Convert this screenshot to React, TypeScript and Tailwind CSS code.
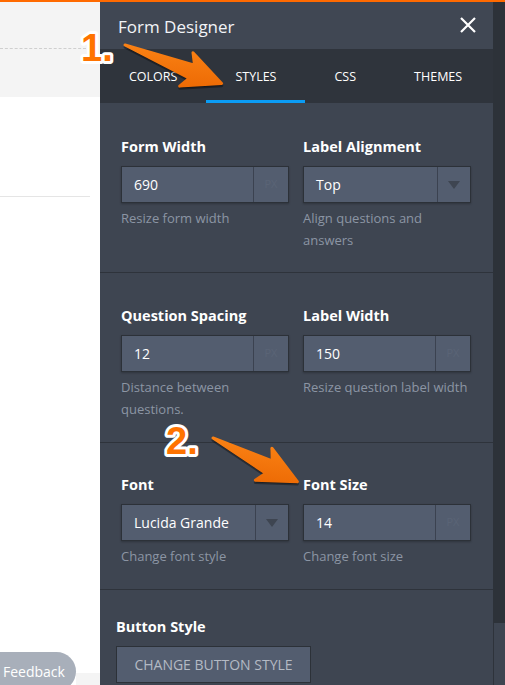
import React from "react";

const font = { fontFamily: '"Open Sans", "Noto Sans", Arial, sans-serif' };

function NumberInput({ value }: { value: string }) {
  return (
    <div className="flex h-[37px] border border-[#2c3138] bg-[#535d6f] shadow-[0_1px_2px_rgba(0,0,0,0.25)]">
      <div className="flex flex-1 items-center pl-[12px] text-[14px] text-white">{value}</div>
      <div className="flex w-[35px] items-center justify-center border-l border-[#3b4250] text-[11px] text-[#5a6476]">PX</div>
    </div>
  );
}

function SelectInput({ value }: { value: string }) {
  return (
    <div className="flex h-[37px] border border-[#2c3138] bg-[#535d6f] shadow-[0_1px_2px_rgba(0,0,0,0.25)]">
      <div className="flex flex-1 items-center pl-[12px] text-[14px] text-white">{value}</div>
      <div className="flex w-[33px] items-center justify-center border-l border-[#3b4250]">
        <div className="h-0 w-0 border-l-[6px] border-r-[6px] border-t-[8px] border-l-transparent border-r-transparent border-t-[#3e4551]" />
      </div>
    </div>
  );
}

function Field({ label, hint, children }: { label: string; hint: React.ReactNode; children: React.ReactNode }) {
  return (
    <div className="flex w-[168px] flex-col">
      <div className="mb-[9px] h-[20px] text-[14.5px] font-bold leading-[20px] text-white">{label}</div>
      {children}
      <div className="mt-[4px] text-[13px] leading-[22px] text-[#8c95a4]">{hint}</div>
    </div>
  );
}

function Section({ top, bottom, children }: { top: string; bottom: string; children: React.ReactNode }) {
  return (
    <div className={"flex gap-[14px] border-b border-[#2e333b] px-[21px] " + top + " " + bottom}>{children}</div>
  );
}

function Arrow({ x, y, angle, len }: { x: number; y: number; angle: number; len: number }) {
  const h = len - 36;
  const pts = `0,0 ${h + 4},-7 ${h - 2},-18 ${len},0 ${h - 2},18 ${h + 4},7`;
  return (
    <g transform={`translate(${x} ${y}) rotate(${angle})`}>
      <polygon points={pts} fill="rgba(0,0,0,0.35)" transform="translate(1 2)" stroke="rgba(0,0,0,0.35)" strokeWidth="3" strokeLinejoin="round" />
      <polygon points={pts} fill="url(#ag)" stroke="url(#ag)" strokeWidth="3" strokeLinejoin="round" />
    </g>
  );
}

export default function App() {
  return (
    <div className="relative flex h-[685px] w-[505px] overflow-hidden border-t-2 border-[#ff6a00] bg-white" style={font}>
      {/* left canvas */}
      <div className="relative flex w-[100px] flex-col">
        <div className="flex h-[95px] items-center bg-[#f4f4f4]">
          <div className="mb-[2px] w-[86px] border-t-[1.5px] border-dashed border-[#cfcfcf]" />
        </div>
        <div className="mt-[99px] w-[90px] border-t border-[#e5e5e5]" />
        <div className="absolute bottom-0 right-0 h-[12px] w-[24px] bg-[#f4f4f4]" />
        <div className="absolute bottom-[-6px] left-[-20px] flex h-[39px] items-center rounded-full bg-[#a8afba] pl-[23px] pr-[11px] text-[14px] text-white">
          Feedback
        </div>
      </div>

      {/* designer panel */}
      <div className="flex w-[393px] flex-col bg-[#3e4551]">
        <div className="flex h-[47px] items-center justify-between bg-[#404753] pl-[18px] pr-[16px] pt-[2px]">
          <span className="text-[17px] text-[#f2f4f7]">Form Designer</span>
          <svg width="18" height="18" viewBox="0 0 18 18" className="mb-[3px]">
            <path d="M2 2 L16 16 M16 2 L2 16" stroke="#ffffff" strokeWidth="2.2" />
          </svg>
        </div>
        <div className="flex h-[54px] bg-[#2f343c] text-[12.5px] text-white">
          {["COLORS", "STYLES", "CSS", "THEMES"].map((t) => (
            <div
              key={t}
              className={
                t === "STYLES"
                  ? "flex items-center border-b-[3px] border-[#0a9cf5] px-[29px] pt-[6px]"
                  : "flex items-center px-[29px] pt-[3px]"
              }
            >
              {t}
            </div>
          ))}
        </div>
        <Section top="pt-[34px]" bottom="pb-[21px]">
          <Field label="Form Width" hint="Resize form width">
            <NumberInput value="690" />
          </Field>
          <Field label="Label Alignment" hint={<>Align questions and<br />answers</>}>
            <SelectInput value="Top" />
          </Field>
        </Section>
        <Section top="pt-[33px]" bottom="pb-[22px]">
          <Field label="Question Spacing" hint={<>Distance between<br />questions.</>}>
            <NumberInput value="12" />
          </Field>
          <Field label="Label Width" hint="Resize question label width">
            <NumberInput value="150" />
          </Field>
        </Section>
        <Section top="pt-[32px]" bottom="pb-[22px]">
          <Field label="Font" hint="Change font style">
            <SelectInput value="Lucida Grande" />
          </Field>
          <Field label="Font Size" hint="Change font size">
            <NumberInput value="14" />
          </Field>
        </Section>
        <div className="flex flex-col px-[16px] pt-[27px]">
          <div className="mb-[9px] h-[20px] text-[14.5px] font-bold leading-[20px] text-white">Button Style</div>
          <button className="h-[37px] w-[195px] border border-[#2c3138] bg-[#535d6f] text-[14px] text-[#b4bac4]">
            CHANGE BUTTON STYLE
          </button>
        </div>
      </div>

      {/* scrollbar */}
      <div className="flex w-[12px] flex-col">
        <div className="h-[621px] bg-[#2d3239]" />
        <div className="flex-1 border-l border-[#2e333b] bg-[#3e4551]" />
      </div>

      {/* annotations */}
      <svg className="pointer-events-none absolute left-0 top-[-2px]" width="505" height="685">
        <defs>
          <linearGradient id="ag" x1="0" y1="0" x2="1" y2="1">
            <stop offset="0" stopColor="#ff8a1a" />
            <stop offset="1" stopColor="#e96400" />
          </linearGradient>
        </defs>
        <Arrow x={125} y={45} angle={21.7} len={104} />
        <Arrow x={213} y={438} angle={27.4} len={95} />
        <text x="81" y="61" fontFamily="Liberation Sans, Arial, sans-serif" fontWeight="bold" fontSize="38" fill="#ff7300" stroke="#ffffff" strokeWidth="6" strokeLinejoin="round" paintOrder="stroke">1.</text>
        <text x="166" y="454" fontFamily="Liberation Sans, Arial, sans-serif" fontWeight="bold" fontSize="38" fill="#ff7300" stroke="#ffffff" strokeWidth="6" strokeLinejoin="round" paintOrder="stroke">2.</text>
      </svg>
    </div>
  );
}
